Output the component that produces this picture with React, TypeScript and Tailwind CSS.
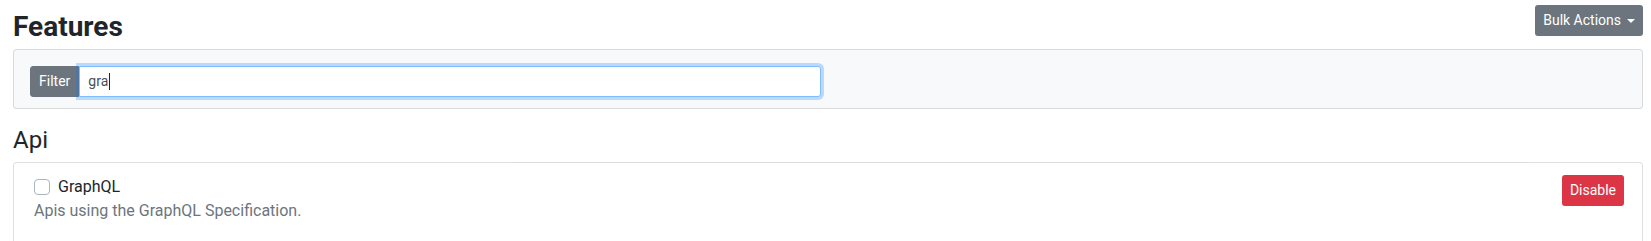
export default function App() {
  return (
    <div className="min-h-[241px] bg-white pl-[13px] pr-[8px] font-['Roboto',sans-serif] text-[#212529]">
      <div className="flex h-[49px] items-start justify-between">
        <h3 className="m-0 pt-[10px] text-[28px] font-bold leading-[33.6px]">Features</h3>
        <button
          type="button"
          className="mt-[5px] flex h-[31px] items-center rounded-[3px] bg-[#6c757d] px-2 text-[14px] text-white"
        >
          Bulk Actions
          <span className="ml-[6px] inline-block h-0 w-0 border-x-[4px] border-t-[4px] border-x-transparent border-t-white" />
        </button>
      </div>

      <div className="rounded border border-black/[0.125] bg-[#f8f9fa] px-4 pt-4 pb-[11px]">
        <div className="flex h-[31px] w-[791px] items-stretch">
          <span className="flex items-center rounded-l-[3px] border border-[#6c757d] bg-[#6c757d] px-2 text-[14px] text-white">
            Filter
          </span>
          <div className="flex flex-1 items-center rounded-r-[3px] border border-[#80bdff] bg-white px-2 text-[14px] text-[#495057] shadow-[0_0_0_3px_rgba(0,123,255,0.25)]">
            gra
            <span className="ml-px inline-block h-[17px] w-px bg-[#212529]" />
          </div>
        </div>
      </div>

      <h4 className="mt-[17px] mb-[7px] text-[24px] font-normal leading-[28.8px]">Api</h4>

      <div className="rounded-t border border-b-0 border-black/[0.125] bg-white pt-3 pr-[18px] pb-6 pl-5">
        <div className="flex items-start justify-between">
          <div>
            <label className="flex h-6 items-center text-[16px]">
              <span className="mr-2 inline-block h-4 w-4 rounded border border-[#adb5bd] bg-white" />
              GraphQL
            </label>
            <p className="m-0 text-[16px] leading-6 text-[#6c757d]">Apis using the GraphQL Specification.</p>
          </div>
          <button
            type="button"
            className="h-[31px] rounded-[3px] bg-[#dc3545] px-2 text-[14px] text-white"
          >
            Disable
          </button>
        </div>
      </div>
    </div>
  );
}
